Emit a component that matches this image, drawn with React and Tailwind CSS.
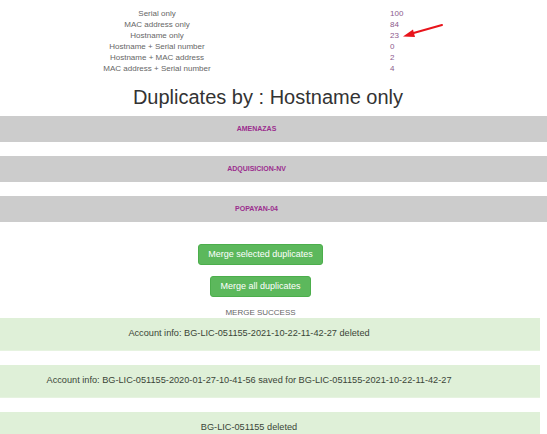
import React from "react";

const counts = [
  { label: "Serial only", value: "100" },
  { label: "MAC address only", value: "84" },
  { label: "Hostname only", value: "23" },
  { label: "Hostname + Serial number", value: "0" },
  { label: "Hostname + MAC address", value: "2" },
  { label: "MAC address + Serial number", value: "4" },
];

const hosts = ["AMENAZAS", "ADQUISICION-NV", "POPAYAN-04"];

const messages = [
  "Account info: BG-LIC-051155-2021-10-22-11-42-27 deleted",
  "Account info: BG-LIC-051155-2020-01-27-10-41-56 saved for BG-LIC-051155-2021-10-22-11-42-27",
  "BG-LIC-051155 deleted",
];

const App = () => {
  return (
    <div
      className="relative w-[547px] h-[434px] overflow-hidden bg-white"
      style={{ fontFamily: '"Liberation Sans", Arial, sans-serif' }}
    >
      {/* Summary table */}
      <div className="pt-[8px]">
        {counts.map((row) => (
          <div key={row.label} className="flex text-[8px] leading-[11px]">
            <div className="w-[314px] text-center text-[#666]">{row.label}</div>
            <div className="pl-[76px] text-[#8c5a8c]">{row.value}</div>
          </div>
        ))}
      </div>

      {/* Arrow pointing at the hostname count */}
      <svg
        className="absolute left-[400px] top-[22px]"
        width="48"
        height="20"
        viewBox="0 0 48 20"
      >
        <line x1="42" y1="3" x2="10" y2="12" stroke="#e8141b" strokeWidth="2" strokeLinecap="round" />
        <polygon points="3,14.5 13,7.5 15,15" fill="#e8141b" />
      </svg>

      <h1 className="mt-[12px] pr-[11px] text-center text-[20px] leading-[22px] font-normal text-[#333]">
        Duplicates by : Hostname only
      </h1>

      {/* Duplicate hostnames */}
      <div className="mt-[8px] flex flex-col gap-[14px]">
        {hosts.map((h) => (
          <div
            key={h}
            className="h-[26px] flex items-center justify-center pr-[34px] bg-[#cccccc] text-[7px] font-bold text-[#9b2d8e]"
          >
            {h}
          </div>
        ))}
      </div>

      {/* Actions */}
      <div className="mt-[22px] pr-[26px] flex flex-col items-center gap-[11px]">
        <button className="h-[21px] px-[9px] rounded-[3px] bg-[#5cb85c] border border-[#4cae4c] text-white text-[9px] leading-[13px]">
          Merge selected duplicates
        </button>
        <button className="h-[21px] px-[9px] rounded-[3px] bg-[#5cb85c] border border-[#4cae4c] text-white text-[9px] leading-[13px]">
          Merge all duplicates
        </button>
      </div>

      <div className="mt-[10px] pr-[26px] text-center text-[8px] leading-[11px] text-[#666]">
        MERGE SUCCESS
      </div>

      {/* Merge results */}
      <div className="flex flex-col gap-[14px]">
        {messages.map((m) => (
          <div
            key={m}
            className="w-[540px] h-[33px] flex items-center justify-center pr-[42px] bg-[#dff0d8] border-b border-[#e6f3e0] text-[9.2px] text-[#3a4537]"
          >
            {m}
          </div>
        ))}
      </div>
    </div>
  );
};

export default App;
